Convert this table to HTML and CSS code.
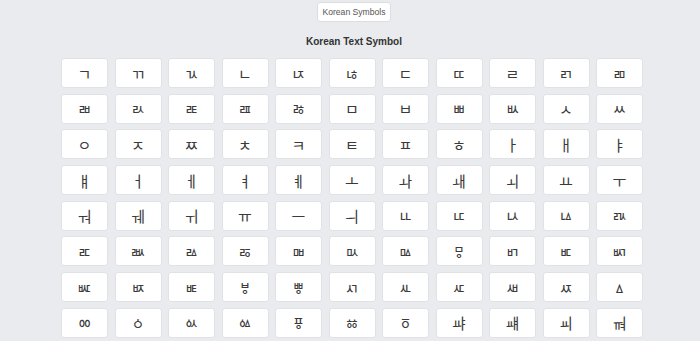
FILE: index.html
```html
<!DOCTYPE html>
<html lang="ko">
<head>
<meta charset="utf-8">
<title>Korean Text Symbol</title>
<link rel="stylesheet" href="styles.css">
</head>
<body>
<div class="page">
  <div class="top">
    <button class="tab">Korean Symbols</button>
  </div>
  <h1 class="title">Korean Text Symbol</h1>
  <div class="grid">
    <div class="cell">ㄱ</div><div class="cell">ㄲ</div><div class="cell">ㄳ</div><div class="cell">ㄴ</div><div class="cell">ㄵ</div><div class="cell">ㄶ</div><div class="cell">ㄷ</div><div class="cell">ㄸ</div><div class="cell">ㄹ</div><div class="cell">ㄺ</div><div class="cell">ㄻ</div>
    <div class="cell">ㄼ</div><div class="cell">ㄽ</div><div class="cell">ㄾ</div><div class="cell">ㄿ</div><div class="cell">ㅀ</div><div class="cell">ㅁ</div><div class="cell">ㅂ</div><div class="cell">ㅃ</div><div class="cell">ㅄ</div><div class="cell">ㅅ</div><div class="cell">ㅆ</div>
    <div class="cell">ㅇ</div><div class="cell">ㅈ</div><div class="cell">ㅉ</div><div class="cell">ㅊ</div><div class="cell">ㅋ</div><div class="cell">ㅌ</div><div class="cell">ㅍ</div><div class="cell">ㅎ</div><div class="cell">ㅏ</div><div class="cell">ㅐ</div><div class="cell">ㅑ</div>
    <div class="cell">ㅒ</div><div class="cell">ㅓ</div><div class="cell">ㅔ</div><div class="cell">ㅕ</div><div class="cell">ㅖ</div><div class="cell">ㅗ</div><div class="cell">ㅘ</div><div class="cell">ㅙ</div><div class="cell">ㅚ</div><div class="cell">ㅛ</div><div class="cell">ㅜ</div>
    <div class="cell">ㅝ</div><div class="cell">ㅞ</div><div class="cell">ㅟ</div><div class="cell">ㅠ</div><div class="cell">ㅡ</div><div class="cell">ㅢ</div><div class="cell">ㅥ</div><div class="cell">ㅦ</div><div class="cell">ㅧ</div><div class="cell">ㅨ</div><div class="cell">ㅩ</div>
    <div class="cell">ㅪ</div><div class="cell">ㅫ</div><div class="cell">ㅬ</div><div class="cell">ㅭ</div><div class="cell">ㅮ</div><div class="cell">ㅯ</div><div class="cell">ㅰ</div><div class="cell">ㅱ</div><div class="cell">ㅲ</div><div class="cell">ㅳ</div><div class="cell">ㅴ</div>
    <div class="cell">ㅵ</div><div class="cell">ㅶ</div><div class="cell">ㅷ</div><div class="cell">ㅸ</div><div class="cell">ㅹ</div><div class="cell">ㅺ</div><div class="cell">ㅻ</div><div class="cell">ㅼ</div><div class="cell">ㅽ</div><div class="cell">ㅾ</div><div class="cell">ㅿ</div>
    <div class="cell">ㆀ</div><div class="cell">ㆁ</div><div class="cell">ㆂ</div><div class="cell">ㆃ</div><div class="cell">ㆄ</div><div class="cell">ㆅ</div><div class="cell">ㆆ</div><div class="cell">ㆇ</div><div class="cell">ㆈ</div><div class="cell">ㆉ</div><div class="cell">ㆊ</div>
  </div>
</div>
</body>
</html>
```

FILE: styles.css
```css
html, body {
  margin: 0;
  padding: 0;
  background: #e9ebee;
  overflow: hidden;
}

body {
  font-family: "Liberation Sans", Arial, sans-serif;
  color: #333;
}

.page {
  padding-left: 8px;
  padding-top: 2px;
}

.top {
  display: flex;
  justify-content: center;
}

.tab {
  height: 20px;
  width: 74px;
  padding: 0;
  background: #fff;
  border: 1px solid #dcdde0;
  border-radius: 3px;
  font-family: "Liberation Sans", Arial, sans-serif;
  font-size: 8.6px;
  color: #555;
}

.title {
  margin: 14px 0 0 0;
  font-size: 10px;
  line-height: 12px;
  font-weight: bold;
  text-align: center;
  color: #333;
}

.grid {
  margin: 10px 0 0 53px;
  display: grid;
  grid-template-columns: repeat(11, 47px);
  grid-auto-rows: 30px;
  column-gap: 6.5px;
  row-gap: 5.7px;
}

.cell {
  display: flex;
  align-items: center;
  justify-content: center;
  background: #fff;
  border: 1px solid #e1e2e5;
  border-radius: 3px;
  font-family: "Noto Sans CJK KR", "Noto Sans", sans-serif;
  font-size: 15px;
  color: #3a3a3a;
}
```
